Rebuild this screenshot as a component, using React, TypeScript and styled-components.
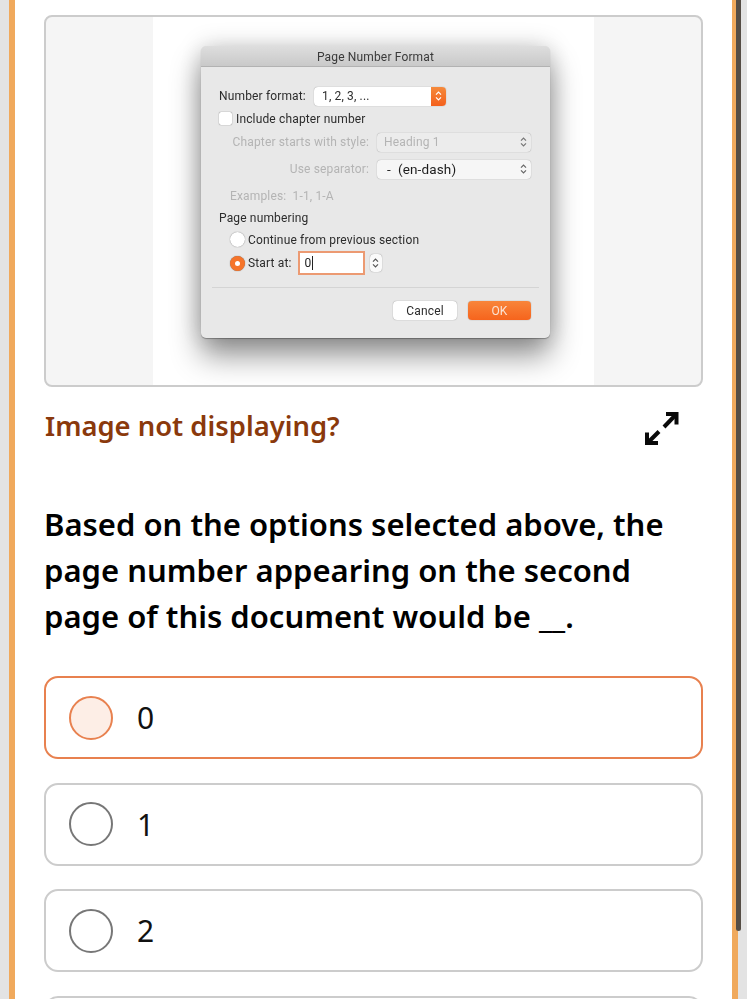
import React from "react";
import styled, { createGlobalStyle } from "styled-components";

const GlobalStyle = createGlobalStyle`
	html, body {
		margin: 0;
		height: 1003px;
		overflow: hidden;
		background: #ffffff;
	}
	* {
		box-sizing: border-box;
	}
`;

const Shell = styled.div`
	position: relative;
	height: 999px;
	padding: 0 9px;
	background: #e3e3e3;
	font-family: "Noto Sans", "Open Sans", sans-serif;
`;

const Scrollbar = styled.div`
	position: absolute;
	top: 0;
	left: 736px;
	width: 5px;
	height: 931px;
	background: #544c44;
	border-radius: 0 0 3px 3px;
`;

const Page = styled.main`
	height: 100%;
	overflow: hidden;
	padding: 15px 29px 0;
	background: #ffffff;
	border-left: 6px solid #f0a95c;
	border-right: 6px solid #f0a95c;
`;

const ImageFrame = styled.div`
	height: 372px;
	display: flex;
	justify-content: center;
	overflow: hidden;
	background: #f5f5f5;
	border: 2px solid #cccccc;
	border-radius: 8px;
`;

const Screenshot = styled.div`
	width: 441px;
	height: 100%;
	padding: 29px 0 0 48px;
	background: #ffffff;
`;

const Dialog = styled.div`
	width: 349px;
	height: 292px;
	background: #e8e8e8;
	border-radius: 5px;
	box-shadow: 0 1px 1px rgba(0, 0, 0, 0.3), 0 18px 30px rgba(0, 0, 0, 0.42), 0 0 24px rgba(0, 0, 0, 0.18);
	font-family: Roboto, "Liberation Sans", sans-serif;
	font-size: 12px;
	letter-spacing: 0.15px;
	color: #2c2c2c;
	filter: blur(0.35px);
`;

const DialogTitle = styled.div`
	height: 21px;
	padding-top: 2px;
	display: flex;
	align-items: center;
	justify-content: center;
	background: linear-gradient(#dedede, #c9c9c9);
	border-bottom: 1px solid #b2b2b2;
	border-radius: 5px 5px 0 0;
	color: #3a3a3a;
`;

const DialogBody = styled.div`
	padding: 18px 19px 0 18px;
`;

const Row = styled.div<{ $height: number; $indent?: number }>`
	height: ${(p) => p.$height}px;
	padding-left: ${(p) => p.$indent ?? 0}px;
	display: flex;
	align-items: center;
`;

const FieldLabel = styled.span`
	width: 88px;
	flex-shrink: 0;
`;

const Muted = styled.span<{ $width?: number }>`
	width: ${(p) => (p.$width ? `${p.$width}px` : "auto")};
	text-align: right;
	color: #b4b4b4;
	flex-shrink: 0;
`;

const NumberSelect = styled.div`
	width: 132px;
	height: 19px;
	margin-left: 7px;
	display: flex;
	background: #ffffff;
	border-radius: 4px;
	box-shadow: 0 0 1px rgba(0, 0, 0, 0.45);
`;

const SelectValue = styled.span`
	flex: 1;
	padding-left: 8px;
	line-height: 19px;
`;

const OrangeCap = styled.span`
	width: 15px;
	display: flex;
	align-items: center;
	justify-content: center;
	background: linear-gradient(#f58a3c, #f4601c);
	border-radius: 0 4px 4px 0;
`;

const GreySelect = styled.div<{ $active?: boolean }>`
	width: 154px;
	height: 19px;
	margin-left: 8px;
	padding: 0 4px 0 ${(p) => (p.$active ? 10 : 7)}px;
	display: flex;
	align-items: center;
	justify-content: space-between;
	background: ${(p) => (p.$active ? "#f6f6f6" : "#ececec")};
	border-radius: 4px;
	box-shadow: 0 0 1px rgba(0, 0, 0, 0.4);
	font-size: ${(p) => (p.$active ? 13.5 : 12)}px;
	color: ${(p) => (p.$active ? "#1d1d1d" : "#b4b4b4")};
`;

const Checkbox = styled.span`
	width: 13px;
	height: 13px;
	margin-right: 4px;
	background: #ffffff;
	border-radius: 2px;
	box-shadow: 0 0 1px rgba(0, 0, 0, 0.7);
`;

const DialogRadio = styled.span<{ $on?: boolean }>`
	width: 15px;
	height: 15px;
	margin-right: 3px;
	display: flex;
	align-items: center;
	justify-content: center;
	background: ${(p) => (p.$on ? "#f5742a" : "#ffffff")};
	border-radius: 50%;
	box-shadow: 0 0 1px rgba(0, 0, 0, 0.6);
	&::after {
		content: "";
		width: 5px;
		height: 5px;
		border-radius: 50%;
		background: ${(p) => (p.$on ? "#ffffff" : "transparent")};
	}
`;

const StartInput = styled.div`
	width: 67px;
	height: 24px;
	margin-left: 6px;
	padding-left: 5px;
	display: flex;
	align-items: center;
	background: #ffffff;
	border: 2px solid #ec9a72;
	color: #222222;
`;

const Caret = styled.span`
	width: 1px;
	height: 14px;
	margin-left: 1px;
	background: #222222;
`;

const Stepper = styled.span`
	width: 12px;
	height: 18px;
	margin-left: 5px;
	display: flex;
	align-items: center;
	justify-content: center;
	background: #fafafa;
	border-radius: 4px;
	box-shadow: 0 0 1px rgba(0, 0, 0, 0.5);
`;

const Divider = styled.div`
	height: 1px;
	margin: 12px -8px 0 -7px;
	background: #d4d4d4;
`;

const ButtonRow = styled.div`
	height: 45px;
	display: flex;
	align-items: center;
	justify-content: flex-end;
	gap: 11px;
`;

const DialogButton = styled.span<{ $primary?: boolean }>`
	width: ${(p) => (p.$primary ? 63 : 64)}px;
	height: 19px;
	display: flex;
	align-items: center;
	justify-content: center;
	background: ${(p) => (p.$primary ? "linear-gradient(#f8853a, #f6641d)" : "#ffffff")};
	border-radius: 4px;
	box-shadow: 0 0 1px rgba(0, 0, 0, 0.5);
	color: ${(p) => (p.$primary ? "#fbe3d4" : "#2c2c2c")};
`;

const LinkRow = styled.div`
	height: 77px;
	padding: 20px 23px 0 1px;
	display: flex;
	align-items: flex-start;
	justify-content: space-between;
`;

const ImageLink = styled.a`
	font-size: 27.4px;
	font-weight: 600;
	line-height: 37px;
	color: #8a390c;
`;

const ExpandSvg = styled.svg`
	margin-top: 4px;
	flex-shrink: 0;
`;

const Question = styled.h2`
	margin: 37px 0 37px;
	font-size: 31px;
	font-weight: 600;
	line-height: 46px;
	color: #000000;
`;

const Options = styled.div`
	display: flex;
	flex-direction: column;
	gap: 23.5px;
`;

const Option = styled.div<{ $selected?: boolean }>`
	height: 83px;
	flex-shrink: 0;
	padding-left: 23px;
	display: flex;
	align-items: center;
	gap: 24px;
	background: #ffffff;
	border: 2px solid ${(p) => (p.$selected ? "#e8814f" : "#cccccc")};
	border-radius: 14px;
	font-size: 30px;
	color: #111111;
`;

const Radio = styled.span<{ $selected?: boolean }>`
	width: 44px;
	height: 44px;
	background: ${(p) => (p.$selected ? "#fdeee6" : "#ffffff")};
	border: 2px solid ${(p) => (p.$selected ? "#e8814f" : "#777777")};
	border-radius: 50%;
`;

const UpDown = ({ color, size = 10 }: { color: string; size?: number }) => (
	<svg width={size * 0.7} height={size} viewBox="0 0 7 10" fill="none" stroke={color} strokeWidth="1.2">
		<path d="M1 3.6 3.5 1 6 3.6M1 6.4 3.5 9 6 6.4" />
	</svg>
);

const ExpandIcon = () => (
	<ExpandSvg width="36" height="36" viewBox="0 0 36 36" fill="none" stroke="#0a0a0a" strokeWidth="4">
		<path d="M22 3H32.500V13.500" />
		<path d="M32 3.500 20 16" />
		<path d="M3 21.500V32H14" />
		<path d="M3.500 32 15 20.500" />
	</ExpandSvg>
);

const answers = ["0", "1", "2"];

export default function App() {
	return (
		<Shell>
			<GlobalStyle />
			<Page>
				<ImageFrame>
					<Screenshot>
						<Dialog>
							<DialogTitle>Page Number Format</DialogTitle>
							<DialogBody>
								<Row $height={22}>
									<FieldLabel>Number format:</FieldLabel>
									<NumberSelect>
										<SelectValue>1, 2, 3, ...</SelectValue>
										<OrangeCap>
											<UpDown color="#ffffff" />
										</OrangeCap>
									</NumberSelect>
								</Row>
								<Row $height={23}>
									<Checkbox />
									Include chapter number
								</Row>
								<Row $height={24}>
									<Muted $width={150}>Chapter starts with style:</Muted>
									<GreySelect>
										Heading 1
										<UpDown color="#777777" />
									</GreySelect>
								</Row>
								<Row $height={30}>
									<Muted $width={150}>Use separator:</Muted>
									<GreySelect $active>
										-&nbsp;&nbsp;(en-dash)
										<UpDown color="#666666" />
									</GreySelect>
								</Row>
								<Row $height={23} $indent={11}>
									<Muted>Examples:&nbsp;&nbsp;1-1, 1-A</Muted>
								</Row>
								<Row $height={21}>Page numbering</Row>
								<Row $height={23} $indent={11}>
									<DialogRadio />
									Continue from previous section
								</Row>
								<Row $height={24} $indent={11}>
									<DialogRadio $on />
									Start at:
									<StartInput>
										0
										<Caret />
									</StartInput>
									<Stepper>
										<UpDown color="#555555" />
									</Stepper>
								</Row>
								<Divider />
								<ButtonRow>
									<DialogButton>Cancel</DialogButton>
									<DialogButton $primary>OK</DialogButton>
								</ButtonRow>
							</DialogBody>
						</Dialog>
					</Screenshot>
				</ImageFrame>
				<LinkRow>
					<ImageLink>Image not displaying?</ImageLink>
					<ExpandIcon />
				</LinkRow>
				<Question>
					Based on the options selected above, the page number appearing on the second page of this
					document would be __.
				</Question>
				<Options>
					{answers.map((answer, i) => (
						<Option key={answer} $selected={i === 0}>
							<Radio $selected={i === 0} />
							{answer}
						</Option>
					))}
					<Option />
				</Options>
			</Page>
			<Scrollbar />
		</Shell>
	);
}
